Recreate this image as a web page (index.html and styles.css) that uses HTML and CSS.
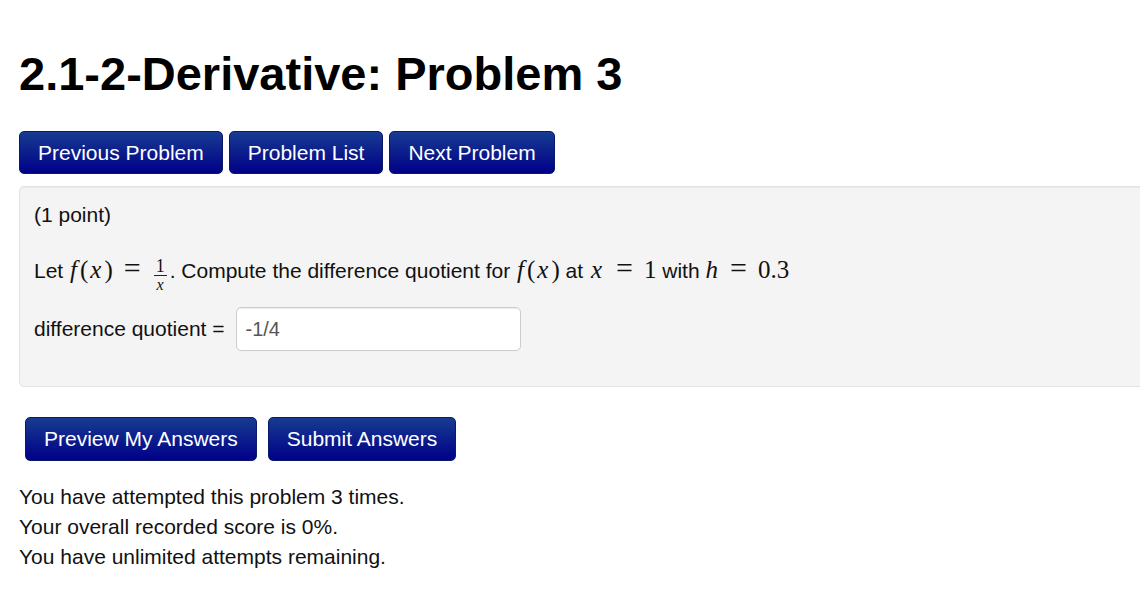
FILE: index.html
```html
<!DOCTYPE html>
<html lang="en">
<head>
<meta charset="utf-8">
<title>2.1-2-Derivative: Problem 3</title>
<link rel="stylesheet" href="styles.css">
</head>
<body>
<div class="page">
  <h1 class="title">2.1-2-Derivative: Problem 3</h1>
  <div class="nav">
    <a class="btn">Previous Problem</a>
    <a class="btn">Problem List</a>
    <a class="btn">Next Problem</a>
  </div>
  <div class="well">
    <div class="points">(1 point)</div>
    <div class="problem">Let <span class="m"><i class="f">f</i>(<i class="x">x</i>)<span class="rel">=</span><span class="frac"><span class="num">1</span><span class="den"><i>x</i></span></span></span>. Compute the difference quotient for <span class="m"><i class="f">f</i>(<i class="x">x</i>)</span> at <span class="m"><i class="x">x</i><span class="rel">=</span>1</span> with <span class="m"><i class="h">h</i><span class="rel">=</span>0.3</span></div>
    <div class="answer">
      <label class="label" for="ans">difference quotient =</label>
      <input class="input" id="ans" type="text" value="-1/4">
    </div>
  </div>
  <div class="actions">
    <a class="btn">Preview My Answers</a>
    <a class="btn">Submit Answers</a>
  </div>
  <div class="status">
    <div>You have attempted this problem 3 times.</div>
    <div>Your overall recorded score is 0%.</div>
    <div>You have unlimited attempts remaining.</div>
  </div>
</div>
</body>
</html>
```
FILE: styles.css
```css
html, body {
  margin: 0;
  padding: 0;
  background: #fff;
  overflow: hidden;
}
body {
  font-family: "Liberation Sans", Arial, sans-serif;
  font-size: 21px;
  line-height: 30px;
  color: #111;
}
.page {
  padding: 0 0 0 19px;
}
.title {
  margin: 0;
  padding-top: 44px;
  font-size: 47px;
  line-height: 60px;
  font-weight: bold;
  color: #000;
}
.nav {
  display: flex;
  gap: 6px;
  margin-top: 27px;
}
.btn {
  display: inline-block;
  box-sizing: border-box;
  height: 44px;
  padding: 6px 18px;
  line-height: 30px;
  font-size: 21px;
  color: #fff;
  background: linear-gradient(to bottom, #173b90, #000088);
  border: 1px solid #0a1a6a;
  border-radius: 5px;
  white-space: nowrap;
}
.nav .btn {
  height: 43px;
  line-height: 29px;
}
.well {
  margin-top: 12px;
  margin-right: -20px;
  background: #f4f4f4;
  border: 1px solid #e3e3e3;
  border-radius: 5px;
  box-shadow: inset 0 1px 1px rgba(0, 0, 0, 0.05);
  padding: 13px 14px 35px 14px;
}
.points {
  line-height: 30px;
}
.problem {
  margin-top: 23px;
  height: 30px;
  line-height: 30px;
  white-space: nowrap;
}
.m {
  font-family: "Liberation Serif", "Times New Roman", serif;
  font-size: 25px;
  line-height: 30px;
  white-space: nowrap;
}
.m i {
  font-style: italic;
}
.m .f {
  padding: 0 3px 0 1px;
}
.m .x {
  padding: 0 3px 0 2px;
}
.m .h {
  padding: 0 1px 0 0;
}
.rel {
  margin: 0 11px;
  font-size: 30px;
}
.frac {
  display: inline-flex;
  flex-direction: column;
  align-items: center;
  vertical-align: 6px;
  font-size: 18px;
  line-height: 13px;
  margin: -10px 3px -10px 2px;
}
.num {
  padding: 0 2px 2px;
  border-bottom: 1px solid #222;
}
.den {
  padding-top: 2px;
}
.den i {
  font-size: 16px;
}
.answer {
  margin-top: 24px;
  display: flex;
  align-items: center;
  gap: 11px;
}
.label {
  line-height: 30px;
}
.input {
  box-sizing: border-box;
  width: 285px;
  height: 44px;
  padding: 6px 9px;
  font-family: "Liberation Sans", Arial, sans-serif;
  font-size: 20px;
  color: #555;
  background: #fff;
  border: 1px solid #ccc;
  border-radius: 5px;
  box-shadow: inset 0 1px 1px rgba(0, 0, 0, 0.075);
  margin: 0;
}
.actions {
  display: flex;
  gap: 11px;
  margin-top: 30px;
  padding-left: 6px;
}
.status {
  margin-top: 21px;
  line-height: 30px;
}
```
